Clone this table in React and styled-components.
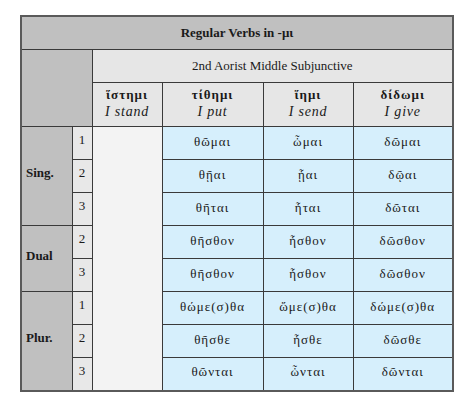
import * as React from 'react';
import styled, { createGlobalStyle } from 'styled-components';

const Global = createGlobalStyle`
    body {
        margin: 0;
        background: #ffffff;
        font-family: "Liberation Serif", "Times New Roman", serif;
    }
`;

const rows = [
    { group: 'Sing.', span: 3, num: 1, forms: ['θῶμαι', 'ὦμαι', 'δῶμαι'] },
    { num: 2, forms: ['θῇαι', 'ᾗαι', 'δῷαι'] },
    { num: 3, forms: ['θῆται', 'ἧται', 'δῶται'] },
    { group: 'Dual', span: 2, num: 2, forms: ['θῆσθον', 'ἧσθον', 'δῶσθον'] },
    { num: 3, forms: ['θῆσθον', 'ἧσθον', 'δῶσθον'] },
    { group: 'Plur.', span: 3, num: 1, forms: ['θώμε(σ)θα', 'ὥμε(σ)θα', 'δώμε(σ)θα'] },
    { num: 2, forms: ['θῆσθε', 'ἧσθε', 'δῶσθε'] },
    { num: 3, forms: ['θῶνται', 'ὦνται', 'δῶνται'] },
];

const verbs = [
    ['ἵστημι', 'I stand'],
    ['τίθημι', 'I put'],
    ['ἵημι', 'I send'],
    ['δίδωμι', 'I give'],
];

const App = () => {
    return (
        <Page>
            <Global />
            <Table>
                <colgroup>
                    <Col $w={51} />
                    <Col $w={20} />
                    <Col $w={70} />
                    <Col $w={101} />
                    <Col $w={90} />
                    <Col $w={100} />
                </colgroup>
                <thead>
                    <tr>
                        <Title colSpan={6}>Regular Verbs in -μι</Title>
                    </tr>
                    <tr>
                        <Corner colSpan={2} rowSpan={2} />
                        <Sub colSpan={4}>2nd Aorist Middle Subjunctive</Sub>
                    </tr>
                    <tr>
                        {verbs.map(([gr, en]) => (
                            <Verb key={gr}>
                                <b>{gr}</b>
                                <i>{en}</i>
                            </Verb>
                        ))}
                    </tr>
                </thead>
                <tbody>
                    {rows.map((r, i) => (
                        <Row key={i}>
                            {r.group && <Group rowSpan={r.span}>{r.group}</Group>}
                            <Num>{r.num}</Num>
                            {i === 0 && <Empty rowSpan={8} />}
                            {r.forms.map((f) => (
                                <Form key={f}>{f}</Form>
                            ))}
                        </Row>
                    ))}
                </tbody>
            </Table>
        </Page>
    );
};

const Page = styled.div`
    padding: 15px 0 0 20px;
`;

const Col = styled.col`
    width: ${(p) => p.$w}px;
`;

const Table = styled.table`
    border-collapse: collapse;
    table-layout: fixed;
    width: 432px;
    border: 2px solid #5a5a5a;
    font-family: "Liberation Serif", "Times New Roman", serif;
    font-size: 13px;
    color: #1a1a1a;

    td, th {
        border: 1px solid #3a3a3a;
        padding: 0;
        font-family: "Liberation Serif", "Times New Roman", serif;
    }
`;

const Title = styled.th`
    height: 32px;
    background: #c0c0c0;
    font-weight: bold;
    font-size: 13px;
`;

const Corner = styled.th`
    background: #c0c0c0;
`;

const Sub = styled.th`
    height: 32px;
    background: #e6e6e6;
    font-weight: normal;
    font-size: 13px;
`;

const Verb = styled.th`
    height: 40px;
    background: #e6e6e6;
    text-align: center;
    line-height: 17px;
    padding-bottom: 3px !important;

    b {
        display: block;
        font-size: 13px;
        letter-spacing: 1px;
    }

    i {
        display: block;
        font-weight: normal;
        font-size: 14px;
        letter-spacing: 0.8px;
    }
`;

const Row = styled.tr`
    height: 33px;
`;

const Group = styled.td`
    background: #c0c0c0;
    font-weight: bold;
    font-size: 13px;
    text-align: left;
    padding: 0 0 6px 4px !important;
`;

const Num = styled.td`
    background: #e8e8e8;
    text-align: center;
    font-size: 13px;
    padding-bottom: 6px !important;
`;

const Empty = styled.td`
    background: #f3f3f3;
`;

const Form = styled.td`
    background: #d6effc;
    text-align: center;
    font-size: 13px;
    letter-spacing: 1px;
    padding-bottom: 3px !important;
`;

export default App;
